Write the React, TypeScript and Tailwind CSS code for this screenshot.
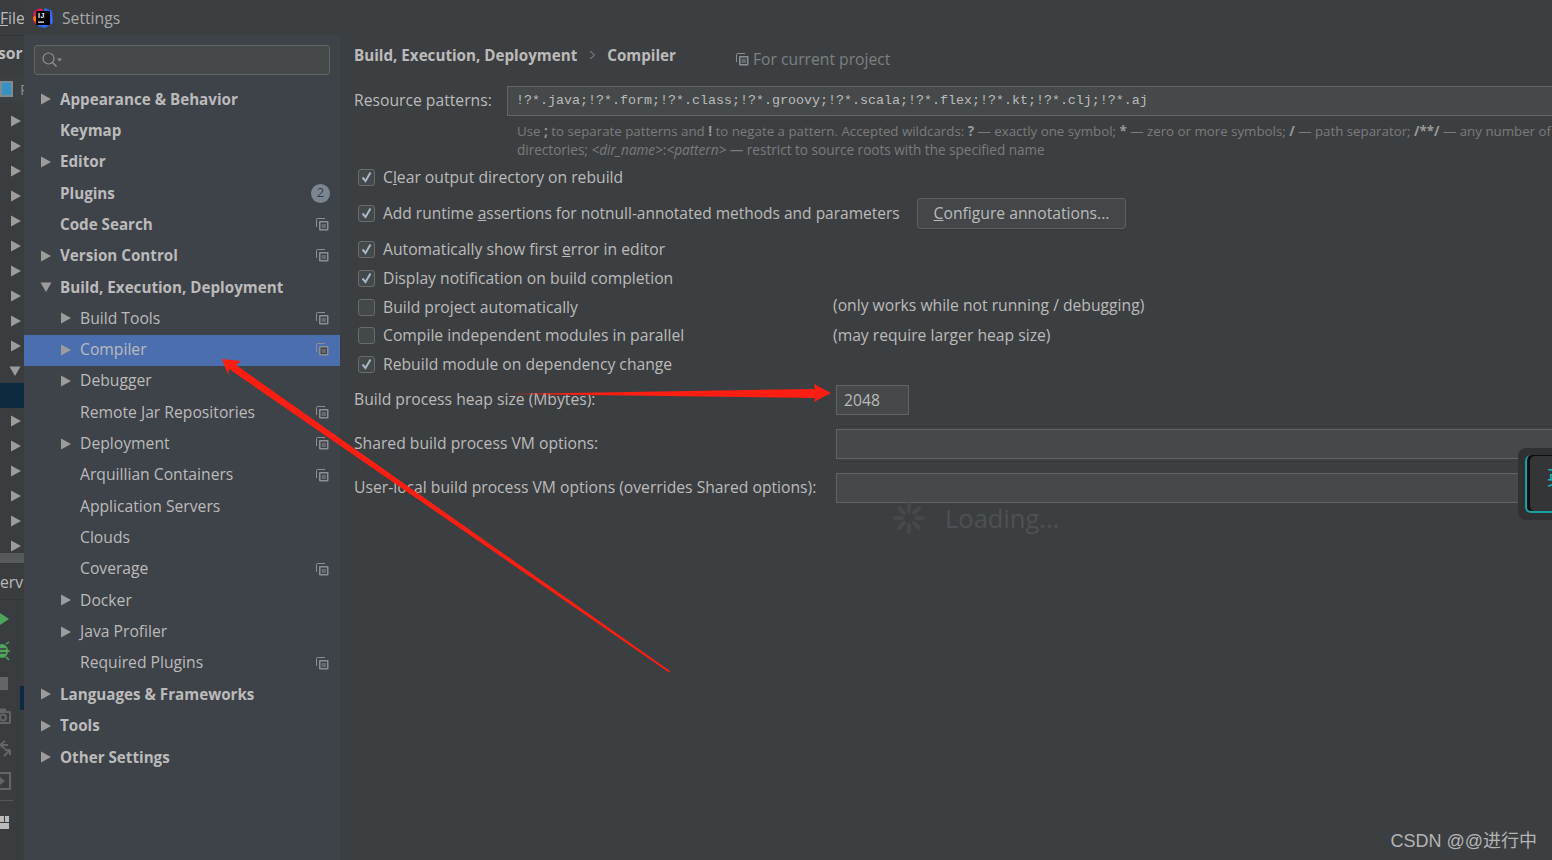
import React from "react";

const tree = [
  { label: "Appearance & Behavior", level: 0, arrow: true },
  { label: "Keymap", level: 0 },
  { label: "Editor", level: 0, arrow: true },
  { label: "Plugins", level: 0, badge: true },
  { label: "Code Search", level: 0, copy: true },
  { label: "Version Control", level: 0, arrow: true, copy: true },
  { label: "Build, Execution, Deployment", level: 0, open: true },
  { label: "Build Tools", level: 1, arrow: true, copy: true },
  { label: "Compiler", level: 1, arrow: true, copy: true, selected: true },
  { label: "Debugger", level: 1, arrow: true },
  { label: "Remote Jar Repositories", level: 1, copy: true },
  { label: "Deployment", level: 1, arrow: true, copy: true },
  { label: "Arquillian Containers", level: 1, copy: true },
  { label: "Application Servers", level: 1 },
  { label: "Clouds", level: 1 },
  { label: "Coverage", level: 1, copy: true },
  { label: "Docker", level: 1, arrow: true },
  { label: "Java Profiler", level: 1, arrow: true },
  { label: "Required Plugins", level: 1, copy: true },
  { label: "Languages & Frameworks", level: 0, arrow: true },
  { label: "Tools", level: 0, arrow: true },
  { label: "Other Settings", level: 0, arrow: true },
];

function Arrow({ open = false, className = "" }: { open?: boolean; className?: string }) {
  return (
    <svg width="12" height="12" viewBox="0 0 12 12" className={className}>
      <path d={open ? "M0.5 1.5H11.5L6 11Z" : "M1 0.5L11 6L1 11.5Z"} fill="#9c9c9c" />
    </svg>
  );
}

function CopyIcon({ className = "" }: { className?: string }) {
  return (
    <svg width="13" height="13" viewBox="0 0 13 13" fill="none" className={className}>
      <path d="M0.5 9V1.5A1 1 0 0 1 1.5 0.5H9" stroke="#8c9094" />
      <rect x="3" y="3" width="9.5" height="9.5" rx="1" fill="#8c9094" />
      <rect x="4.5" y="4.5" width="6.5" height="6.5" fill="#3e4249" />
      <path d="M5.5 7H10M5.5 9H10" stroke="#8c9094" />
    </svg>
  );
}

function Check({ on }: { on: boolean }) {
  return (
    <span className="flex h-[17px] w-[17px] shrink-0 items-center justify-center rounded-[3px] border border-[#6b6b6b] bg-[#43494a]">
      {on && (
        <svg width="13" height="13" viewBox="0 0 13 13" fill="none">
          <path d="M2.5 6.5L5.5 10L10.5 1.5" stroke="#a9b7c6" strokeWidth="2" />
        </svg>
      )}
    </span>
  );
}

function CheckRow({ on, className, children }: { on: boolean; className: string; children: React.ReactNode }) {
  return (
    <div className={`flex items-center gap-[8px] pl-[4px] ${className}`}>
      <Check on={on} />
      <span className="pt-[2px]">{children}</span>
    </div>
  );
}

function Mini({ children }: { children: React.ReactNode }) {
  return <b className="font-bold text-[#999999]">{children}</b>;
}

function LeftStrip() {
  const top = Array.from({ length: 10 });
  const bottom = Array.from({ length: 6 });
  return (
    <div className="flex h-full w-[24px] shrink-0 flex-col overflow-hidden bg-[#3a3d3f] text-[#bbbbbb]">
      <div className="h-[35px] pt-[7px] text-[15.7px] leading-[22px]">
        <u>F</u>ile
      </div>
      <div className="-ml-[2px] h-[40px] border-t border-[#333638] pt-[6px] text-[15.7px] font-bold leading-[22px]">sor</div>
      <div className="flex h-[28px] items-center gap-[7px] bg-[#3d4043]">
        <span className="h-[16px] w-[13px] shrink-0 border-2 border-[#7f8b91] bg-[#3592c4]" />
        <span className="text-[15px] leading-[22px] text-[#8d8f91]">P</span>
      </div>
      <div className="flex flex-col pt-[5px]">
        {top.map((_, i) => (
          <div key={i} className="flex h-[25px] items-center pl-[10px]">
            <Arrow />
          </div>
        ))}
        <div className="flex h-[25px] items-center pl-[9px]">
          <Arrow open />
        </div>
        <div className="h-[25px] bg-[#0d293e]" />
        {bottom.map((_, i) => (
          <div key={i} className="flex h-[25px] items-center pl-[10px]">
            <Arrow />
          </div>
        ))}
      </div>
      <div className="-mt-[5px] h-[10px] bg-[#575a5c]" />
      <div className="h-[37px] border-y border-[#333638] pt-[7px] text-[15.7px] leading-[22px]">erv</div>
      <div className="flex flex-1">
        <div className="flex w-[18px] shrink-0 flex-col border-r border-[#36393b]">
          <div className="flex h-[37px] items-center">
            <svg width="9" height="12" viewBox="0 0 9 12">
              <path d="M0 0L9 6L0 12Z" fill="#4fa55b" />
            </svg>
          </div>
          <div className="flex h-[28px] items-center">
            <svg width="10" height="20" viewBox="0 0 10 20" fill="none">
              <ellipse cx="2" cy="10" rx="6" ry="7" fill="#4fa55b" />
              <path d="M0 8H6M0 12H6" stroke="#3a3d3f" strokeWidth="1.5" />
              <path d="M6 3L9 1M7 10H10M6 16L9 19" stroke="#4fa55b" strokeWidth="1.5" />
            </svg>
          </div>
          <div className="flex h-[36px] items-center">
            <span className="h-[13px] w-[8px] bg-[#636668]" />
          </div>
          <div className="flex h-[30px] items-center">
            <svg width="11" height="18" viewBox="0 0 11 18" fill="none">
              <rect x="-4" y="5" width="14" height="11" rx="1" stroke="#636668" strokeWidth="2" />
              <circle cx="3" cy="10.5" r="3" stroke="#636668" strokeWidth="2" />
              <path d="M0 3H6" stroke="#636668" strokeWidth="3" />
            </svg>
          </div>
          <div className="flex h-[36px] items-center">
            <svg width="11" height="20" viewBox="0 0 11 20" fill="none">
              <path d="M0 6L5 2M0 6L5 10M0 6H8M10 11L4 17M10 11H5M10 11V16" stroke="#636668" strokeWidth="2" />
            </svg>
          </div>
          <div className="flex h-[28px] items-center">
            <svg width="11" height="18" viewBox="0 0 11 18" fill="none">
              <rect x="-4" y="1" width="14" height="16" stroke="#636668" strokeWidth="2" />
              <path d="M0 5L5 9L0 13Z" fill="#636668" />
            </svg>
          </div>
          <div className="mt-[5px] h-px w-[13px] bg-[#555759]" />
          <div className="mt-[15px] grid w-[9px] grid-cols-2 gap-[1px]">
            <span className="h-[6px] bg-[#bbbbbb]" />
            <span className="h-[6px] bg-[#bbbbbb]" />
            <span className="col-span-2 h-[6px] bg-[#bbbbbb]" />
          </div>
        </div>
        <div className="flex-1 pt-[86px]">
          <div className="ml-[2px] h-[24px] bg-[#0d293e]" />
        </div>
      </div>
    </div>
  );
}

function Sidebar() {
  return (
    <aside className="flex w-[316px] shrink-0 flex-col bg-[#3e4249]">
      <div className="mx-[10px] mt-[10px] flex h-[30px] items-center rounded-[3px] border border-[#646464] bg-[#45494a] pl-[7px]">
        <svg width="21" height="16" viewBox="0 0 21 16" fill="none">
          <circle cx="6.5" cy="6.5" r="5.5" stroke="#8f9193" strokeWidth="1.2" />
          <path d="M10.5 10.5L14.5 14.5" stroke="#8f9193" strokeWidth="1.4" />
          <path d="M15 6.5H20L17.5 9.5Z" fill="#8f9193" />
        </svg>
      </div>
      <nav className="mt-[9px] flex flex-col">
        {tree.map((row) => (
          <div
            key={row.label}
            className={`flex h-[31.33px] items-center pb-[1px] pr-[11px] text-[#bbbbbb] ${row.selected ? "bg-[#4b6eaf]" : ""} ${row.level === 0 ? "pl-[16px] text-[15.2px] font-bold" : "pl-[36px] text-[15.7px]"}`}
          >
            <span className="flex w-[20px] shrink-0 items-center">
              {(row.arrow || row.open) && <Arrow open={row.open} />}
            </span>
            <span className="flex-1">{row.label}</span>
            {row.copy && <CopyIcon />}
            {row.badge && (
              <span className="-mr-[1px] flex h-[19px] w-[19px] items-center justify-center rounded-full bg-[#7a8793] text-[13px] font-normal text-[#3c3f41]">
                2
              </span>
            )}
          </div>
        ))}
      </nav>
    </aside>
  );
}

function Content() {
  return (
    <main className="min-w-0 flex-1 overflow-hidden pl-[14px] text-[15.7px] text-[#bbbbbb]">
      <div className="flex h-[51px] items-start">
        <div className="flex w-[382px] items-center pt-[9px] text-[15.2px] font-bold leading-[22px]">
          <span>Build, Execution, Deployment</span>
          <svg width="7" height="10" viewBox="0 0 7 10" fill="none" className="ml-[12px] mr-[11px]">
            <path d="M1 1L5.5 5L1 9" stroke="#8e8e8e" />
          </svg>
          <span>Compiler</span>
        </div>
        <div className="flex items-center gap-[4px] pt-[13px] leading-[22px] text-[#7d7f80]">
          <CopyIcon />
          <span>For current project</span>
        </div>
      </div>

      <div className="flex h-[30px] items-center">
        <span className="w-[153px] shrink-0 pb-[1px]">Resource patterns:</span>
        <div className="h-full w-[1100px] shrink-0 border border-[#646464] bg-[#45494a] pl-[8px] font-['Liberation_Mono',monospace] text-[13.33px] leading-[27px]">
          {"!?*.java;!?*.form;!?*.class;!?*.groovy;!?*.scala;!?*.flex;!?*.kt;!?*.clj;!?*.aj"}
        </div>
      </div>

      <div className="mt-[6px] w-[1100px] pl-[163px] text-[13.3px] leading-[19px] text-[#7a7c7d]">
        <div className="whitespace-nowrap">
          Use <Mini>;</Mini> to separate patterns and <Mini>!</Mini> to negate a pattern. Accepted wildcards: <Mini>?</Mini> — exactly one symbol; <Mini>*</Mini> — zero or more symbols; <Mini>/</Mini> — path separator; <Mini>/**/</Mini> — any number of
        </div>
        <div className="whitespace-nowrap text-[13.55px]">
          directories; <i>&lt;dir_name&gt;</i>:<i>&lt;pattern&gt;</i> — restrict to source roots with the specified name
        </div>
      </div>

      <CheckRow on className="mt-[6px] h-[22px]">
        C<u>l</u>ear output directory on rebuild
      </CheckRow>

      <div className="mt-[10px] flex h-[30px] items-center">
        <CheckRow on className="w-[563px] text-[15.5px]">
          Add runtime <u>a</u>ssertions for notnull-annotated methods and parameters
        </CheckRow>
        <button className="flex h-[31px] w-[209px] items-center justify-center rounded-[3px] border border-[#5e6060] bg-[#43474a] pt-[2px] text-[#bbbbbb] shadow-[0_1px_0_#353739]">
          <span>
            <u>C</u>onfigure annotations...
          </span>
        </button>
      </div>

      <CheckRow on className="mt-[10px] h-[22px]">
        Automatically show first <u>e</u>rror in editor
      </CheckRow>
      <CheckRow on className="mt-[7px] h-[22px]">
        Display notification on build completion
      </CheckRow>
      <div className="mt-[7px] flex h-[22px] items-center">
        <CheckRow on={false} className="w-[479px]">
          Build project automatically
        </CheckRow>
        <span className="-mt-[2px]">(only works while not running / debugging)</span>
      </div>
      <div className="mt-[6px] flex h-[22px] items-center">
        <CheckRow on={false} className="w-[479px]">
          Compile independent modules in parallel
        </CheckRow>
        <span className="pt-[2px]">(may require larger heap size)</span>
      </div>
      <CheckRow on className="mt-[7px] h-[22px]">
        Rebuild module on dependency change
      </CheckRow>

      <div className="mt-[10px] flex h-[30px] items-center">
        <span className="w-[482px] shrink-0">Build process heap size (Mbytes):</span>
        <div className="h-full w-[73px] border border-[#646464] bg-[#45494a] pl-[7px] leading-[28px]">2048</div>
      </div>
      <div className="mt-[14px] flex h-[30px] items-center">
        <span className="w-[482px] shrink-0">Shared build process VM options:</span>
        <div className="h-full w-[800px] shrink-0 border border-[#646464] bg-[#45494a]" />
      </div>
      <div className="mt-[14px] flex h-[30px] items-center">
        <span className="w-[482px] shrink-0">User-local build process VM options (overrides Shared options):</span>
        <div className="h-full w-[800px] shrink-0 border border-[#646464] bg-[#45494a]" />
      </div>

      <div className="-mt-[3px] flex items-center gap-[18px] pl-[537px] text-[25.5px] leading-[34px] text-[#4d5153]">
        <svg width="36" height="36" viewBox="0 0 36 36" stroke="#45494b" strokeWidth="4" strokeLinecap="round">
          <path d="M18 4V11M18 25V32M4 18H11M25 18H32M8 8L13 13M23 23L28 28M8 28L13 23M23 13L28 8" />
        </svg>
        <span>Loading...</span>
      </div>
    </main>
  );
}

export default function App() {
  return (
    <div className="relative flex h-[860px] w-[1552px] overflow-hidden bg-[#3c3f41] font-['Open_Sans',sans-serif]">
      <LeftStrip />
      <div className="flex min-w-0 flex-1 flex-col">
        <header className="flex h-[35px] shrink-0 items-center gap-[9px] pl-[9px] text-[15.7px] text-[#a9a9a9]">
          <svg width="20" height="20" viewBox="0 0 20 20">
            <path d="M1 3L8 0L11 4L3 17L0 12Z" fill="#e5175c" />
            <path d="M12 0L19 3L20 15L12 20L5 18Z" fill="#2f6cf2" />
            <path d="M0 9L4 8V14L1 13Z" fill="#f97a12" />
            <rect x="3" y="3" width="14" height="14" fill="#000000" />
            <text x="5" y="10" fontSize="7" fontWeight="700" letterSpacing="0.6" fontFamily="Liberation Sans" fill="#ffffff">IJ</text>
            <rect x="5" y="13.5" width="6" height="1.2" fill="#ffffff" />
          </svg>
          <span className="pt-[2px]">Settings</span>
        </header>
        <div className="flex min-h-0 flex-1">
          <Sidebar />
          <Content />
        </div>
      </div>

      {/* annotations over the shot */}
      <svg className="pointer-events-none absolute inset-0" width="1552" height="860" viewBox="0 0 1552 860">
        <path d="M222 359L241 361L236 365L670 671L669 672.5L229 369L228 375Z" fill="#fb1f13" />
        <path d="M503 394L815 389L814 384L831 393L814 402L815 398Z" fill="#fb1f13" />
      </svg>

      {/* overlapping widget on the right edge */}
      <div className="absolute left-[1518px] top-[448px] h-[72px] w-[60px] rounded-[8px] bg-[#2f3133] p-[7px]">
        <div className="h-full w-full rounded-[6px] border-b-2 border-l-2 border-[#17a2a8] bg-[#0d0f10] pl-[3px] pt-[1px]">
          <div className="h-full w-full rounded-[5px] bg-[#333537] pl-[17px] pt-[9px] font-['Noto_Sans_CJK_SC',sans-serif] text-[20px] leading-[24px] text-[#18b5b5]">
            英
          </div>
        </div>
      </div>

      <div className="absolute bottom-[7px] right-[15px] font-['Liberation_Sans','Noto_Sans_CJK_SC',sans-serif] text-[18px] leading-[24px] text-[#b4b4b4]">
        CSDN @@进行中
      </div>
    </div>
  );
}
